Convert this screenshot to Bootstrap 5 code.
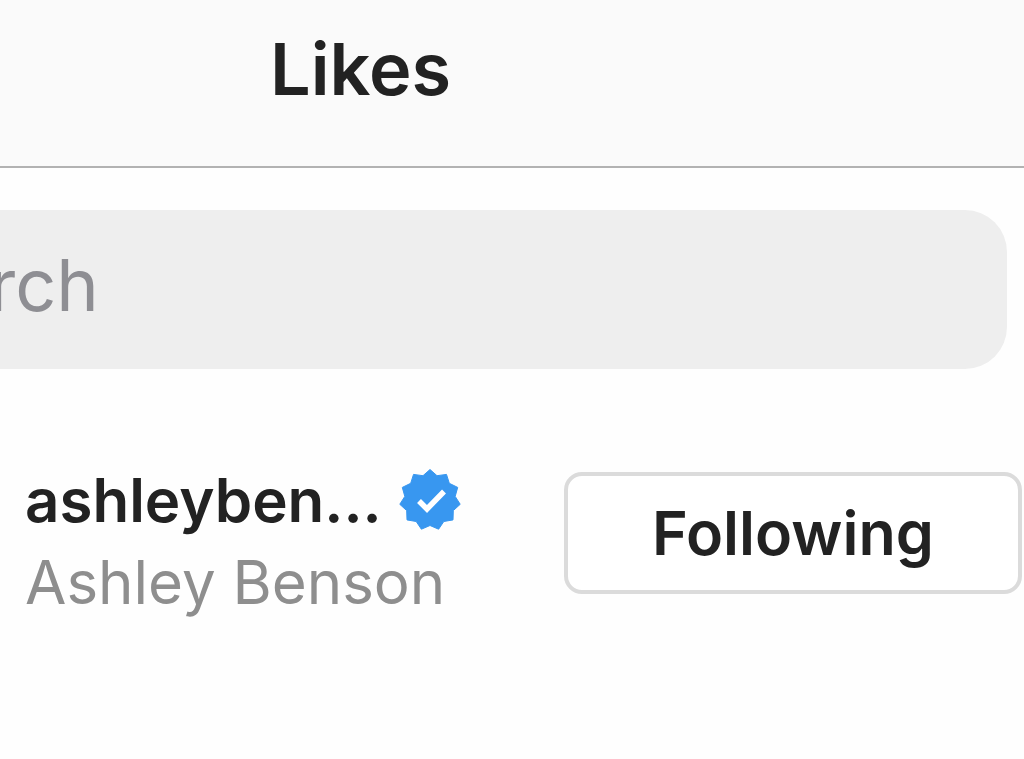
<!DOCTYPE html>
<html lang="en">
<head>
<meta charset="utf-8">
<meta name="viewport" content="width=device-width, initial-scale=1">
<title>Likes</title>
<link href="https://cdn.jsdelivr.net/npm/bootstrap@5.3.0/dist/css/bootstrap.min.css" rel="stylesheet">
<style>
  body { font-family: Inter, "Liberation Sans", sans-serif; color: #222; background: #fefefe; overflow-x: hidden; }
  .top-bar { background: #fafafa; border-bottom: 2px solid #b2b2b2; padding: 24px 24px 52px 270px; }
  .top-title { font-size: 72px; line-height: 90px; font-weight: 600; }
  .search-area { padding: 42px 17px 0 0; }
  .search-field { margin-left: -164px; height: 159px; border-radius: 42px; background: #eee; font-size: 72px; padding: 0 24px 10px; color: #222; }
  .search-field:focus { background: #eee; }
  .search-field::placeholder { color: #8e8e93; }
  .like-row { padding: 99px 2px 24px 25px; }
  .user-name { font-size: 60px; line-height: 60px; font-weight: 600; color: #222; }
  .full-name { font-size: 60px; line-height: 84px; color: #8e8e8e; }
  .verified { width: 64px; height: 64px; }
  .follow-btn { width: 458px; height: 122px; border: 4px solid #dbdbdb; border-radius: 18px; background: #fff; font-size: 61px; line-height: 90px; font-weight: 600; color: #222; }
</style>
</head>
<body>
<header class="top-bar">
  <h1 class="top-title m-0">Likes</h1>
</header>
<main>
  <form class="search-area d-flex" role="search">
    <label class="visually-hidden" for="search">Search</label>
    <input class="search-field form-control border-0 shadow-none flex-grow-1 w-auto" id="search" type="text" placeholder="Search">
  </form>
  <div class="like-row d-flex justify-content-between align-items-start">
    <div>
      <div class="d-flex align-items-center">
        <a class="user-name text-decoration-none" href="#">ashleyben...</a>
        <svg class="verified ms-3" viewBox="-32 -32 64 64" role="img" aria-label="Verified">
          <path fill="#3897f0" stroke="#3897f0" stroke-linejoin="round" d="M0-30.500L7-24.300 16.500-25.600 19.300-16.700 27.700-12.600 25.200-3.600 30.200 4.300 23.300 10.600 23 19.900 13.800 21.500 8.600 29.200 0 25.500-8.600 29.200-13.800 21.500-23 19.900-23.300 10.600-30.200 4.300-25.200-3.600-27.700-12.600-19.300-16.700-16.500-25.600-7-24.300Z"/>
          <path fill="none" stroke="#fff" stroke-width="5.5" d="M-11 1L-3 9 14-8.500"/>
        </svg>
      </div>
      <div class="full-name mt-2">Ashley Benson</div>
    </div>
    <button class="follow-btn btn p-0 mt-1" type="button">Following</button>
  </div>
</main>
<script src="https://cdn.jsdelivr.net/npm/bootstrap@5.3.0/dist/js/bootstrap.bundle.min.js"></script>
</body>
</html>
